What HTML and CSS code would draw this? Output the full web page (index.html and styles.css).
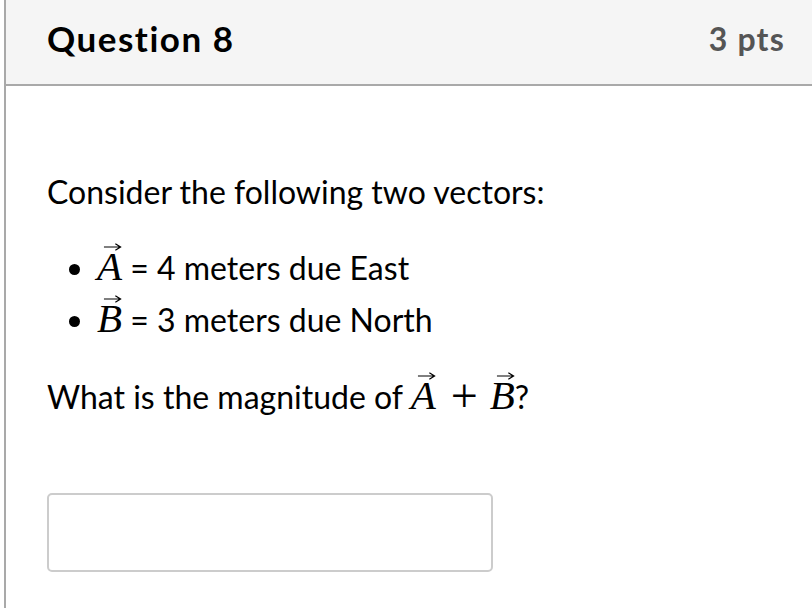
FILE: index.html
```html
<!DOCTYPE html>
<html>
<head>
<meta charset="utf-8">
<link rel="stylesheet" href="styles.css">
</head>
<body>
<div class="card">
  <div class="header">
    <span class="title">Question 8</span>
    <span class="pts">3 pts</span>
  </div>
  <div class="content">
    <p class="intro">Consider the following two vectors:</p>
    <ul class="list">
      <li><span class="vec"><svg class="arrow" viewBox="0 0 20 10"><path d="M1 5H18M13 1.5L18.5 5L13 8.5" fill="none" stroke="#000" stroke-width="1.3"/></svg><span class="var">A</span></span> = 4 meters due East</li>
      <li><span class="vec"><svg class="arrow" viewBox="0 0 20 10"><path d="M1 5H18M13 1.5L18.5 5L13 8.5" fill="none" stroke="#000" stroke-width="1.3"/></svg><span class="var">B</span></span> = 3 meters due North</li>
    </ul>
    <p class="ask">What is the magnitude of <span class="vec"><svg class="arrow" viewBox="0 0 20 10"><path d="M1 5H18M13 1.5L18.5 5L13 8.5" fill="none" stroke="#000" stroke-width="1.3"/></svg><span class="var">A</span></span><span class="op">+</span><span class="vec"><svg class="arrow" viewBox="0 0 20 10"><path d="M1 5H18M13 1.5L18.5 5L13 8.5" fill="none" stroke="#000" stroke-width="1.3"/></svg><span class="var">B</span></span>?</p>
    <div class="answer"></div>
  </div>
</div>
</body>
</html>
```
FILE: styles.css
```css
html, body {
  margin: 0;
  padding: 0;
  background: #fff;
}
body {
  font-family: Lato, "Open Sans", sans-serif;
  color: #000;
  width: 812px;
  height: 608px;
  overflow: hidden;
}
.card {
  margin-left: 4px;
  border-left: 2px solid #a9a9a9;
  height: 608px;
}
.header {
  height: 76px;
  background: #f5f5f5;
  border-bottom: 2px solid #a9a9a9;
  display: flex;
  align-items: center;
  justify-content: space-between;
  padding: 0 27px 8px 41px;
}
.title {
  font-size: 35px;
  font-weight: 700;
  letter-spacing: 1.5px;
}
.pts {
  font-size: 32px;
  font-weight: 700;
  color: #555;
  letter-spacing: 1.2px;
}
.content {
  padding: 0 0 0 41px;
}
.intro {
  margin: 86px 0 0;
  font-size: 32px;
  line-height: 40px;
}
.list {
  margin: 30px 0 0;
  padding-left: 50px;
  font-size: 32px;
  line-height: 52px;
}
.ask {
  margin: 30px 0 0;
  font-size: 32px;
  line-height: 40px;
}
.vec {
  position: relative;
  display: inline-block;
  line-height: 0.9;
}
.var {
  font-family: "Liberation Serif", "DejaVu Serif", serif;
  font-style: italic;
  font-size: 41px;
}
.arrow {
  position: absolute;
  right: 0;
  top: -6px;
  width: 19px;
  height: 10px;
}
.op {
  font-family: "Liberation Serif", serif;
  font-size: 48px;
  line-height: 40px;
  vertical-align: -3px;
  margin: 0 12px 0 15px;
}
.answer {
  margin-top: 76px;
  width: 442px;
  height: 75px;
  border: 2px solid #cccccc;
  border-radius: 5px;
}
```
